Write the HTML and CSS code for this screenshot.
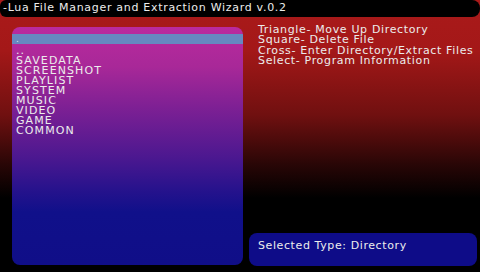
FILE: index.html
```html
<!DOCTYPE html>
<html>
<head>
<meta charset="utf-8">
<link rel="stylesheet" href="styles.css">
</head>
<body>
<div class="screen">
  <div class="titlebar">-Lua File Manager and Extraction Wizard v.0.2</div>
  <div class="main">
    <div class="browser">
      <div class="row highlight">.</div>
      <div class="list">
        <div class="row">..</div>
        <div class="row">SAVEDATA</div>
        <div class="row">SCREENSHOT</div>
        <div class="row">PLAYLIST</div>
        <div class="row">SYSTEM</div>
        <div class="row">MUSIC</div>
        <div class="row">VIDEO</div>
        <div class="row">GAME</div>
        <div class="row">COMMON</div>
      </div>
    </div>
    <div class="side">
      <div class="help">
        <div>Triangle- Move Up Directory</div>
        <div>Square- Delete File</div>
        <div>Cross- Enter Directory/Extract Files</div>
        <div>Select- Program Information</div>
      </div>
      <div class="status">Selected Type: Directory</div>
    </div>
  </div>
</div>
</body>
</html>
```
FILE: styles.css
```css
html, body {
  margin: 0;
  padding: 0;
}
body {
  width: 480px;
  height: 272px;
  overflow: hidden;
  font-family: "DejaVu Sans", sans-serif;
  font-size: 11px;
  color: #ececec;
}
.screen {
  width: 480px;
  height: 272px;
  background: linear-gradient(to bottom, #aa1a1a 0px, #a41818 50px, #701010 115px, #280606 165px, #000 198px, #000 272px);
  display: flex;
  flex-direction: column;
}
.titlebar {
  height: 17px;
  box-sizing: border-box;
  padding: 3px 0 0 3px;
  line-height: 10px;
  background: #000;
  border-radius: 6px 8px 8px 6px;
  letter-spacing: 0.7px;
  white-space: nowrap;
}
.main {
  display: flex;
  padding-top: 10px;
}
.browser {
  margin-left: 12px;
  width: 231px;
  height: 238px;
  border-radius: 8px;
  background: linear-gradient(to bottom, #ba2a9e 0px, #a82898 40px, #7e2094 80px, #4c1890 130px, #24128c 165px, #10108a 185px, #100e88 238px);
  padding-top: 7px;
  box-sizing: border-box;
  overflow: hidden;
}
.row {
  height: 10px;
  line-height: 10px;
  padding-left: 4px;
  letter-spacing: 1.1px;
  white-space: nowrap;
}
.highlight {
  background: #6688c0;
  font-size: 9px;
  color: #d8e0f0;
}
.list {
  margin-top: 2px;
}
.side {
  margin-left: 6px;
  width: 228px;
  height: 239px;
  display: flex;
  flex-direction: column;
}
.help {
  margin-top: -2px;
  padding-left: 9px;
  line-height: 10.3px;
  letter-spacing: 0.65px;
  white-space: nowrap;
}
.status {
  margin-top: auto;
  height: 33px;
  box-sizing: border-box;
  padding: 8px 0 0 9px;
  line-height: 10px;
  background: #0e0c88;
  border-radius: 8px;
  letter-spacing: 0.6px;
}
```
